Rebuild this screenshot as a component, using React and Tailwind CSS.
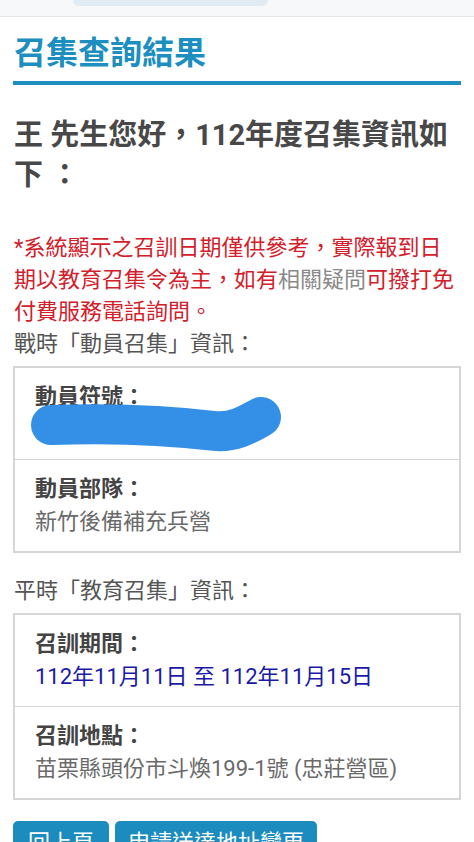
import React from 'react';

const FONT = { fontFamily: 'Roboto, "Noto Sans CJK TC", sans-serif' };

function Row({ label, children, last, scribble }) {
  return (
    <div className={'relative px-[20px] pt-[12px] ' + (last ? 'pb-[13px]' : 'pb-[13px] border-b border-[#d6d6d6]')}>
      <p className="text-[22px] leading-[33px] font-bold text-[#444]">{label}</p>
      <div className="text-[22px] leading-[33px]">{children}</div>
      {scribble && (
        // hand-drawn blur over the number
        <svg className="absolute left-0 top-0" width="300" height="92" viewBox="0 0 300 92">
          <path
            d="M36 57 C 90 55, 150 57, 200 63 C 220 65, 235 55, 246 49"
            fill="none"
            stroke="#3490e6"
            strokeWidth="40"
            strokeLinecap="round"
          />
        </svg>
      )}
    </div>
  );
}

export default function App() {
  return (
    <div className="min-h-screen bg-white overflow-hidden" style={FONT}>
      {/* browser chrome remnant */}
      <div className="h-[17px] bg-[#f7f8fa] border-b border-[#e4e4e4]">
        <div className="ml-[73px] w-[195px] h-[6px] rounded-b-full bg-[#e2eaf2]" />
      </div>

      <div className="px-[13px]">
        <h1 className="mt-[16px] text-[32px] leading-[40px] font-bold text-[#1c8fc0] pl-[1px]">召集查詢結果</h1>
        <div className="mt-[8px] h-[4px] bg-[#1c8fc0]" />

        <h2 className="mt-[30px] text-[29px] leading-[40px] font-bold text-[#484848] pl-[1px]">
          王 先生您好，112年度召集資訊如下 ：
        </h2>

        <p className="mt-[37px] text-[22px] leading-[32px] text-[#d2202b] pl-[1px]">
          *系統顯示之召訓日期僅供參考，實際報到日期以教育召集令為主，如有<span className="text-[#8a8a8a]">相關疑問</span>可撥打免付費服務電話詢問。
        </p>

        <p className="text-[22px] leading-[32px] text-[#555] pl-[1px]">戰時「動員召集」資訊：</p>
        <div className="mt-[6px] border-2 border-[#d6d6d6]">
          <Row label="動員符號：" scribble>
            <span className="text-[#666]">&nbsp;</span>
          </Row>
          <Row label="動員部隊：" last>
            <span className="text-[#6a6a6a]">新竹後備補充兵營</span>
          </Row>
        </div>

        <p className="mt-[22px] text-[22px] leading-[32px] text-[#555] pl-[1px]">平時「教育召集」資訊：</p>
        <div className="mt-[6px] border-2 border-[#d6d6d6]">
          <Row label="召訓期間：">
            <span className="text-[#1a1aa6]">112年11月11日 至 112年11月15日</span>
          </Row>
          <Row label="召訓地點：" last>
            <span className="text-[#6a6a6a]">苗栗縣頭份市斗煥199-1號 (忠莊營區)</span>
          </Row>
        </div>

        <div className="mt-[21px] flex gap-[6px]">
          <button className="h-[44px] px-[15px] rounded-[5px] bg-[#1b8cbd] text-white text-[22px] leading-[44px]">回上頁</button>
          <button className="h-[44px] px-[13px] rounded-[5px] bg-[#1b8cbd] text-white text-[22px] leading-[44px]">申請送達地址變更</button>
        </div>
      </div>
    </div>
  );
}
